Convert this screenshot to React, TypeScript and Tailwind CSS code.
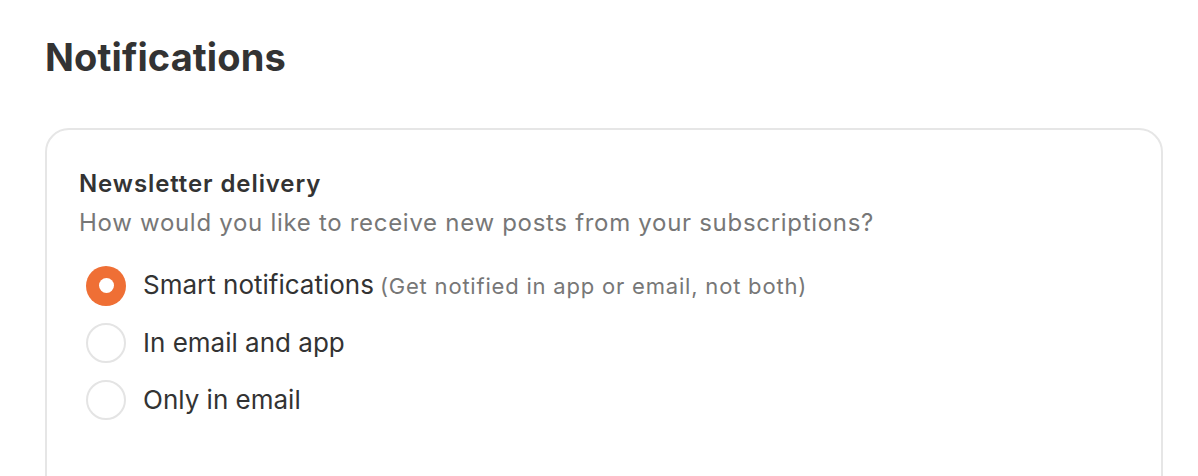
import { useState } from "react";

const options = [
  { id: "smart", label: "Smart notifications", hint: "(Get notified in app or email, not both)" },
  { id: "both", label: "In email and app" },
  { id: "email", label: "Only in email" },
];

export default function App() {
  const [selected, setSelected] = useState("smart");

  return (
    <div className="min-h-screen bg-white pl-[45px] pr-[35px] pt-[33px] font-['Inter',sans-serif] text-[#333]">
      <h1 className="text-[38px] font-bold leading-[48px] tracking-[0.1px]">Notifications</h1>

      <div className="mt-[47px] h-[400px] rounded-[24px] border-2 border-[#e6e6e6] px-[32px] pt-[38px]">
        <h2 className="text-[24px] font-semibold leading-[32px] tracking-[0.9px]">Newsletter delivery</h2>
        <p className="mt-[7px] text-[24px] leading-[32px] tracking-[0.7px] text-[#777]">
          How would you like to receive new posts from your subscriptions?
        </p>

        <div className="mt-[18px] flex flex-col">
          {options.map((o) => {
            const active = selected === o.id;
            return (
              <label
                key={o.id}
                className="flex h-[57px] cursor-pointer items-center gap-[17px] pl-[7px]"
                onClick={() => setSelected(o.id)}
              >
                <span
                  className={
                    active
                      ? "flex h-[40px] w-[40px] shrink-0 items-center justify-center rounded-full bg-[#ef6f35]"
                      : "flex h-[40px] w-[40px] shrink-0 items-center justify-center rounded-full border-2 border-[#e4e4e4]"
                  }
                >
                  {active && <span className="h-[15px] w-[15px] rounded-full bg-white" />}
                </span>
                <span className="text-[26px] leading-[34px]">
                  {o.label}
                  {o.hint && (
                    <span className="ml-[6px] text-[22px] tracking-[0.8px] text-[#777]">{o.hint}</span>
                  )}
                </span>
              </label>
            );
          })}
        </div>
      </div>
    </div>
  );
}
